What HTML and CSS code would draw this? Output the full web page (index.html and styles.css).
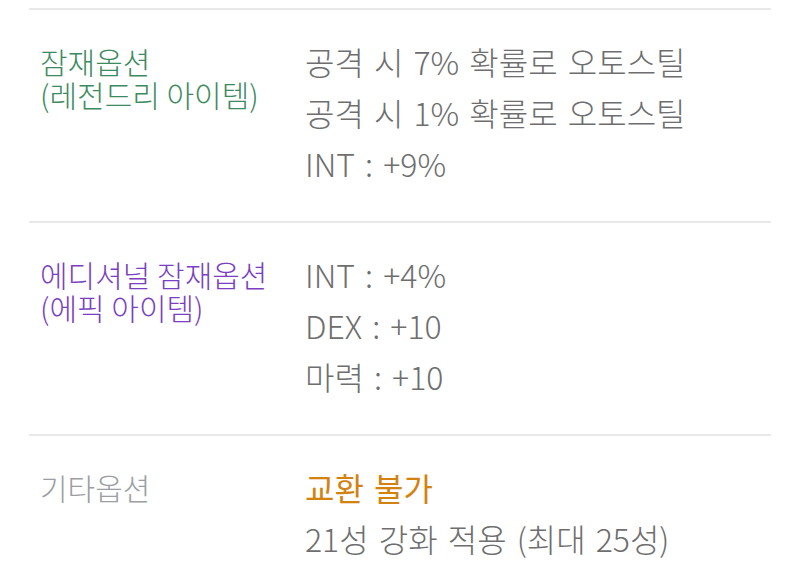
FILE: index.html
```html
<!DOCTYPE html>
<html>
<head>
  <meta charset="utf-8">
  <title>아이템 옵션</title>
  <link rel="stylesheet" href="styles.css">
</head>
<body>
  <div class="options">
    <div class="row">
      <div class="label legendary">잠재옵션<br>(레전드리 아이템)</div>
      <ul class="values">
        <li>공격 시 7% 확률로 오토스틸</li>
        <li>공격 시 1% 확률로 오토스틸</li>
        <li>INT : +9%</li>
      </ul>
    </div>
    <div class="row">
      <div class="label epic">에디셔널 잠재옵션<br>(에픽 아이템)</div>
      <ul class="values">
        <li>INT : +4%</li>
        <li>DEX : +10</li>
        <li>마력 : +10</li>
      </ul>
    </div>
    <div class="row">
      <div class="label etc">기타옵션</div>
      <ul class="values">
        <li class="warn">교환 불가</li>
        <li>21성 강화 적용 (최대 25성)</li>
      </ul>
    </div>
  </div>
</body>
</html>
```

FILE: styles.css
```css
body {
  margin: 0;
  background: #fff;
  font-family: "Noto Sans CJK KR", "Noto Sans", sans-serif;
}

.options {
  margin: 8px 29px 0 29px;
}

.row {
  display: flex;
  border-top: 2px solid #e8e8e8;
  padding: 26px 0 32px 11px;
}

.label {
  width: 265px;
  flex-shrink: 0;
  font-size: 30px;
  line-height: 33px;
  padding-top: 9px;
  font-weight: 300;
}

.legendary { color: #3d8a5e; }
.epic { color: #7a3fc2; }
.etc { color: #9b9ea3; }

.values {
  list-style: none;
  margin: 0;
  padding: 0;
  font-size: 32px;
  line-height: 51px;
  font-weight: 300;
  color: #6e6e6e;
  word-spacing: 3px;
}

.values .warn {
  color: #d4820f;
  font-weight: 400;
}
```
